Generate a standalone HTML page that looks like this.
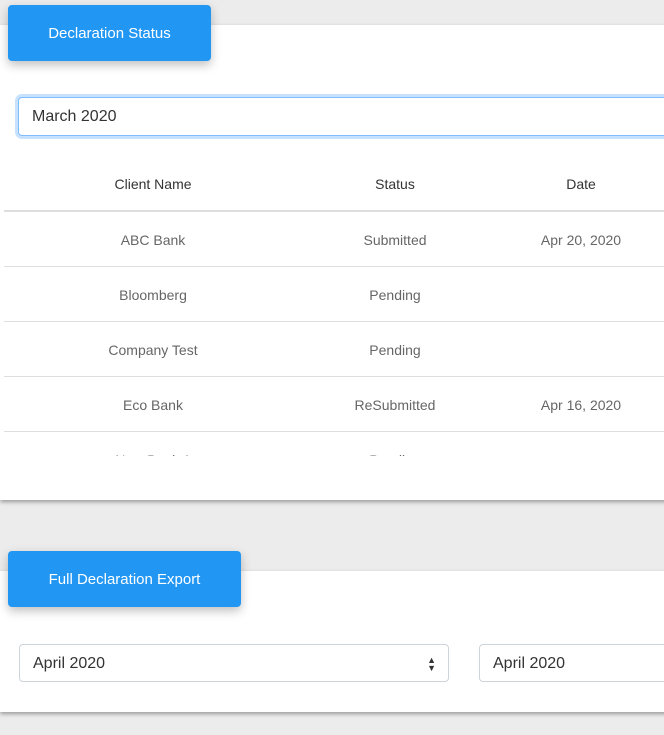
<!DOCTYPE html>
<html><head><style>
body{margin:0;width:664px;height:735px;background:#ececec;font-family:"Liberation Sans",sans-serif;position:relative;overflow:hidden}
.card{position:absolute;left:0;width:700px;background:#fff;box-shadow:0 2px 4px rgba(0,0,0,.35)}
.btn{position:absolute;background:#2196f3;color:#fff;border-radius:4px;font-size:15px;text-align:center;box-shadow:0 4px 10px rgba(0,0,0,.25)}
.inp{position:absolute;background:#fff;border:1px solid #ced4da;border-radius:4px;font-size:16px;color:#333;box-sizing:border-box;padding-left:13px}
.t{position:absolute;font-size:14px;color:#666;transform:translateX(-50%);white-space:nowrap}
.h{color:#333}
.ln{position:absolute;left:4px;width:700px;height:1px;background:#dedede}
</style></head><body>
<div class="card" style="top:25px;height:475px"></div>
<div class="btn" style="left:8px;top:5px;width:203px;height:56px;line-height:58px">Declaration Status</div>
<div class="inp" style="left:18px;top:97px;width:680px;height:39px;line-height:38px;border:1px solid #80bdff;box-shadow:0 0 0 3px rgba(0,123,255,.22)">March 2020</div>
<div class="t h" style="left:153px;top:176px">Client Name</div>
<div class="t h" style="left:395px;top:176px">Status</div>
<div class="t h" style="left:581px;top:176px">Date</div>
<div class="ln" style="top:210px;height:2px"></div>
<div class="t" style="left:153px;top:232px">ABC Bank</div><div class="t" style="left:395px;top:232px">Submitted</div><div class="t" style="left:581px;top:232px">Apr 20, 2020</div>
<div class="ln" style="top:266px"></div>
<div class="t" style="left:153px;top:287px">Bloomberg</div><div class="t" style="left:395px;top:287px">Pending</div>
<div class="ln" style="top:321px"></div>
<div class="t" style="left:153px;top:342px">Company Test</div><div class="t" style="left:395px;top:342px">Pending</div>
<div class="ln" style="top:376px"></div>
<div class="t" style="left:153px;top:397px">Eco Bank</div><div class="t" style="left:395px;top:397px">ReSubmitted</div><div class="t" style="left:581px;top:397px">Apr 16, 2020</div>
<div class="ln" style="top:431px"></div>
<div style="position:absolute;left:0;top:432px;width:664px;height:24px;overflow:hidden">
<div class="t" style="left:153px;top:20px">New Bank 1</div><div class="t" style="left:395px;top:20px">Pending</div></div>
<div class="card" style="top:571px;height:141px"></div>
<div class="btn" style="left:8px;top:551px;width:233px;height:56px;line-height:58px">Full Declaration Export</div>
<div class="inp" style="left:19px;top:644px;width:430px;height:38px;line-height:37px">April 2020<span style="position:absolute;right:12px;top:0;font-size:9px;line-height:8px;padding-top:11px">▲<br>▼</span></div>
<div class="inp" style="left:479px;top:644px;width:230px;height:38px;line-height:37px">April 2020</div>
</body></html>
